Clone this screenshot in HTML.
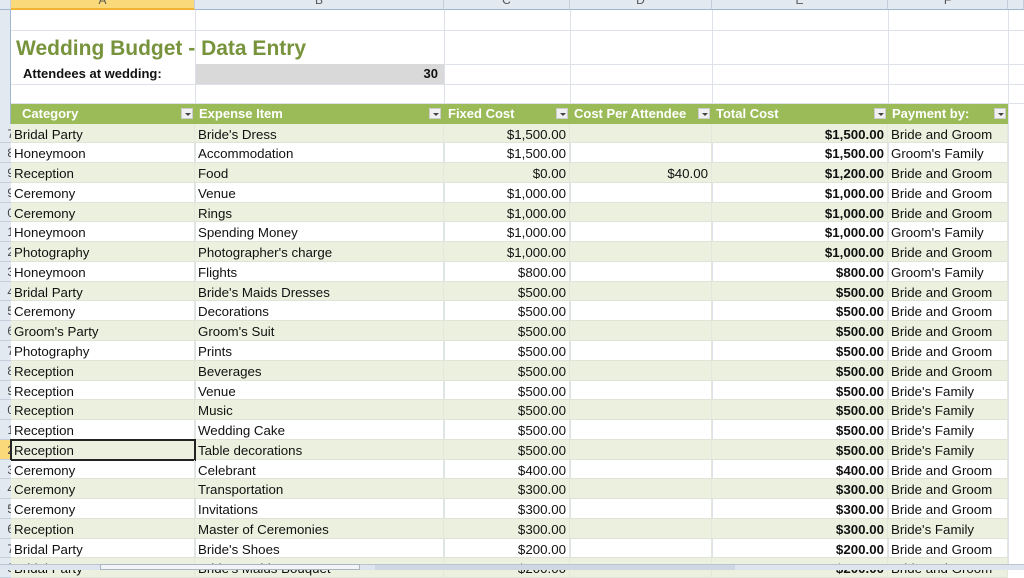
<!DOCTYPE html>
<html><head><meta charset="utf-8"><style>
*{margin:0;padding:0;box-sizing:border-box}
body{width:1024px;height:570px;overflow:hidden;background:#fff;font-family:"Liberation Sans",sans-serif;position:relative;font-size:13.3px;color:#111}
.abs{position:absolute}
.colhdr{top:0;height:10px;background:#e3e9f1;border-bottom:1px solid #9eb6ce;border-right:1px solid #c5cfdc;color:#555;font-size:12px;text-align:center;line-height:0px;overflow:hidden}
.vl{position:absolute;top:10px;bottom:0;width:1px;background:#dde1e8}
.hl{position:absolute;left:11px;right:0;height:1px;background:#dde1e8}
.row{position:absolute;left:11px;width:997px;height:19.77px;display:flex;line-height:21px;border-bottom:1px solid #dfe4d6}
.row div{overflow:hidden;white-space:nowrap;padding:0 3px;border-right:1px solid #e4e8dc}
.g{background:#ebf1de}
.a{width:184px}.b{width:249px}.c{width:126px;text-align:right}.d{width:142px;text-align:right}.e{width:176px;text-align:right;font-weight:bold}.f{width:120px}
.rn{position:absolute;left:0;width:11px;height:19.77px;line-height:21px;background:#e3e9f1;color:#444;font-size:12px;overflow:hidden;text-align:right;border-bottom:1px solid #c5cfdc}
.rn span{position:relative;left:3px}
.hdr{position:absolute;left:11px;top:104px;width:997px;height:19.5px;background:#9bbb59;color:#fff;font-weight:bold;display:flex;line-height:20px;font-size:13px}
.hdr div{position:relative;padding-left:11px}
.dd{position:absolute;top:4px;width:12px;height:11px;background:#f0f0f0;border:1px solid #ccc}
.dd:after{content:"";position:absolute;left:3px;top:4px;border-left:3px solid transparent;border-right:3px solid transparent;border-top:3px solid #444}
</style></head><body>
<div class="abs" style="left:0;top:0;width:11px;height:570px;background:#e3e9f1;border-right:1px solid #9eb6ce"></div>
<div class="abs colhdr" style="left:0;width:11px"></div>
<div class="abs colhdr" style="left:11px;width:184px;background:#f9d97a;border-bottom:2px solid #f2b233">A</div>
<div class="abs colhdr" style="left:195px;width:249px">B</div>
<div class="abs colhdr" style="left:444px;width:126px">C</div>
<div class="abs colhdr" style="left:570px;width:142px">D</div>
<div class="abs colhdr" style="left:712px;width:176px">E</div>
<div class="abs colhdr" style="left:888px;width:120px">F</div>
<div class="abs colhdr" style="left:1008px;width:16px"></div>
<div class="vl" style="left:195px"></div><div class="vl" style="left:444px"></div><div class="vl" style="left:570px"></div><div class="vl" style="left:712px"></div><div class="vl" style="left:888px"></div><div class="vl" style="left:1008px"></div>
<div class="hl" style="top:30px"></div><div class="hl" style="top:64px"></div><div class="hl" style="top:84px"></div><div class="hl" style="top:103px"></div>
<div class="abs" style="left:16px;top:37px;font-size:21px;font-weight:bold;color:#77933c">Wedding Budget - Data Entry</div>
<div class="abs" style="left:11px;top:64px;width:184px;height:20px;background:#fff"></div>
<div class="abs" style="left:23px;top:66px;font-weight:bold;font-size:13px">Attendees at wedding:</div>
<div class="abs" style="left:196px;top:64px;width:248px;height:20px;background:#d9d9d9;text-align:right;font-weight:bold;line-height:20px;padding-right:6px;font-size:13px">30</div>
<div class="hdr">
<div style="width:184px">Category<span class="dd" style="left:170px"></span></div>
<div style="width:249px;padding-left:4px">Expense Item<span class="dd" style="left:234px"></span></div>
<div style="width:126px;padding-left:4px">Fixed Cost<span class="dd" style="left:112px"></span></div>
<div style="width:142px;padding-left:4px">Cost Per Attendee<span class="dd" style="left:128px"></span></div>
<div style="width:176px;padding-left:4px">Total Cost<span class="dd" style="left:162px"></span></div>
<div style="width:120px;padding-left:4px">Payment by:<span class="dd" style="left:106px"></span></div>
</div>
<div class="rn" style="top:123.5px"><span>7</span></div><div class="row g" style="top:123.5px"><div class="a">Bridal Party</div><div class="b">Bride's Dress</div><div class="c">$1,500.00</div><div class="d"></div><div class="e">$1,500.00</div><div class="f">Bride and Groom</div></div>
<div class="rn" style="top:143.27px"><span>8</span></div><div class="row" style="top:143.27px"><div class="a">Honeymoon</div><div class="b">Accommodation</div><div class="c">$1,500.00</div><div class="d"></div><div class="e">$1,500.00</div><div class="f">Groom's Family</div></div>
<div class="rn" style="top:163.04px"><span>9</span></div><div class="row g" style="top:163.04px"><div class="a">Reception</div><div class="b">Food</div><div class="c">$0.00</div><div class="d">$40.00</div><div class="e">$1,200.00</div><div class="f">Bride and Groom</div></div>
<div class="rn" style="top:182.81px"><span>9</span></div><div class="row" style="top:182.81px"><div class="a">Ceremony</div><div class="b">Venue</div><div class="c">$1,000.00</div><div class="d"></div><div class="e">$1,000.00</div><div class="f">Bride and Groom</div></div>
<div class="rn" style="top:202.58px"><span>0</span></div><div class="row g" style="top:202.58px"><div class="a">Ceremony</div><div class="b">Rings</div><div class="c">$1,000.00</div><div class="d"></div><div class="e">$1,000.00</div><div class="f">Bride and Groom</div></div>
<div class="rn" style="top:222.35px"><span>1</span></div><div class="row" style="top:222.35px"><div class="a">Honeymoon</div><div class="b">Spending Money</div><div class="c">$1,000.00</div><div class="d"></div><div class="e">$1,000.00</div><div class="f">Groom's Family</div></div>
<div class="rn" style="top:242.12px"><span>2</span></div><div class="row g" style="top:242.12px"><div class="a">Photography</div><div class="b">Photographer's charge</div><div class="c">$1,000.00</div><div class="d"></div><div class="e">$1,000.00</div><div class="f">Bride and Groom</div></div>
<div class="rn" style="top:261.89px"><span>3</span></div><div class="row" style="top:261.89px"><div class="a">Honeymoon</div><div class="b">Flights</div><div class="c">$800.00</div><div class="d"></div><div class="e">$800.00</div><div class="f">Groom's Family</div></div>
<div class="rn" style="top:281.66px"><span>4</span></div><div class="row g" style="top:281.66px"><div class="a">Bridal Party</div><div class="b">Bride's Maids Dresses</div><div class="c">$500.00</div><div class="d"></div><div class="e">$500.00</div><div class="f">Bride and Groom</div></div>
<div class="rn" style="top:301.43px"><span>5</span></div><div class="row" style="top:301.43px"><div class="a">Ceremony</div><div class="b">Decorations</div><div class="c">$500.00</div><div class="d"></div><div class="e">$500.00</div><div class="f">Bride and Groom</div></div>
<div class="rn" style="top:321.2px"><span>6</span></div><div class="row g" style="top:321.2px"><div class="a">Groom's Party</div><div class="b">Groom's Suit</div><div class="c">$500.00</div><div class="d"></div><div class="e">$500.00</div><div class="f">Bride and Groom</div></div>
<div class="rn" style="top:340.97px"><span>7</span></div><div class="row" style="top:340.97px"><div class="a">Photography</div><div class="b">Prints</div><div class="c">$500.00</div><div class="d"></div><div class="e">$500.00</div><div class="f">Bride and Groom</div></div>
<div class="rn" style="top:360.74px"><span>8</span></div><div class="row g" style="top:360.74px"><div class="a">Reception</div><div class="b">Beverages</div><div class="c">$500.00</div><div class="d"></div><div class="e">$500.00</div><div class="f">Bride and Groom</div></div>
<div class="rn" style="top:380.51px"><span>9</span></div><div class="row" style="top:380.51px"><div class="a">Reception</div><div class="b">Venue</div><div class="c">$500.00</div><div class="d"></div><div class="e">$500.00</div><div class="f">Bride's Family</div></div>
<div class="rn" style="top:400.28px"><span>0</span></div><div class="row g" style="top:400.28px"><div class="a">Reception</div><div class="b">Music</div><div class="c">$500.00</div><div class="d"></div><div class="e">$500.00</div><div class="f">Bride's Family</div></div>
<div class="rn" style="top:420.05px"><span>1</span></div><div class="row" style="top:420.05px"><div class="a">Reception</div><div class="b">Wedding Cake</div><div class="c">$500.00</div><div class="d"></div><div class="e">$500.00</div><div class="f">Bride's Family</div></div>
<div class="rn" style="top:439.82px;background:#f9d97a"><span>2</span></div><div class="row g" style="top:439.82px"><div class="a">Reception</div><div class="b">Table decorations</div><div class="c">$500.00</div><div class="d"></div><div class="e">$500.00</div><div class="f">Bride's Family</div></div>
<div class="abs" style="left:10px;top:439px;width:186px;height:22px;border:2px solid #222"></div>
<div class="rn" style="top:459.59px"><span>3</span></div><div class="row" style="top:459.59px"><div class="a">Ceremony</div><div class="b">Celebrant</div><div class="c">$400.00</div><div class="d"></div><div class="e">$400.00</div><div class="f">Bride and Groom</div></div>
<div class="rn" style="top:479.36px"><span>4</span></div><div class="row g" style="top:479.36px"><div class="a">Ceremony</div><div class="b">Transportation</div><div class="c">$300.00</div><div class="d"></div><div class="e">$300.00</div><div class="f">Bride and Groom</div></div>
<div class="rn" style="top:499.13px"><span>5</span></div><div class="row" style="top:499.13px"><div class="a">Ceremony</div><div class="b">Invitations</div><div class="c">$300.00</div><div class="d"></div><div class="e">$300.00</div><div class="f">Bride and Groom</div></div>
<div class="rn" style="top:518.9px"><span>6</span></div><div class="row g" style="top:518.9px"><div class="a">Reception</div><div class="b">Master of Ceremonies</div><div class="c">$300.00</div><div class="d"></div><div class="e">$300.00</div><div class="f">Bride's Family</div></div>
<div class="rn" style="top:538.67px"><span>7</span></div><div class="row" style="top:538.67px"><div class="a">Bridal Party</div><div class="b">Bride's Shoes</div><div class="c">$200.00</div><div class="d"></div><div class="e">$200.00</div><div class="f">Bride and Groom</div></div>
<div class="rn" style="top:558.44px"><span>8</span></div><div class="row g" style="top:558.44px"><div class="a">Bridal Party</div><div class="b">Bride's Maids Bouquet</div><div class="c">$200.00</div><div class="d"></div><div class="e">$200.00</div><div class="f">Bride and Groom</div></div>
<div class="abs" style="left:0;top:564px;width:1024px;height:6px;background:#dfe5ee;border-top:1px solid #b9c4d2"></div>
<div class="abs" style="left:100px;top:564px;width:260px;height:6px;background:#f2f4f7;border:1px solid #aab5c4"></div>
<div class="abs" style="left:375px;top:565px;width:360px;height:5px;background:#cfd7e2"></div>
</body></html>
